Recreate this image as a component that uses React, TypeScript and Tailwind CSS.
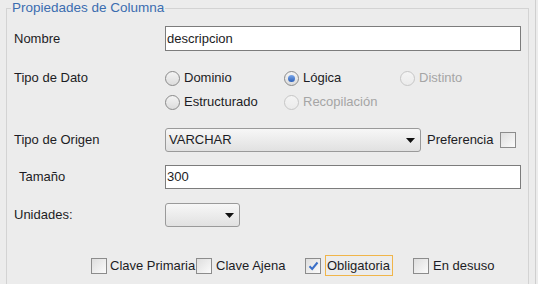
import React from "react";

function Radio({ label, checked = false, disabled = false }: { label: string; checked?: boolean; disabled?: boolean }) {
  return (
    <div className="flex h-[24px] items-center">
      <span
        className={`flex h-[15px] w-[15px] items-center justify-center rounded-full border bg-gradient-to-b from-[#f4f4f4] to-[#dcdcdc] ${
          disabled ? "border-[#c6c6c6] from-[#f4f4f4] to-[#ebebeb]" : "border-[#8a8a8a]"
        }`}
      >
        {checked && <span className="h-[7px] w-[7px] rounded-full bg-gradient-to-b from-[#7aa7ea] to-[#2c5fb8]" />}
      </span>
      <span className={`ml-[4px] ${disabled ? "text-[#a5a5a5]" : ""}`}>{label}</span>
    </div>
  );
}

function Check({ checked = false }: { checked?: boolean }) {
  return (
    <span className="flex h-[16px] w-[16px] shrink-0 items-center justify-center border border-[#8c8c8c] bg-gradient-to-br from-[#dedede] to-[#fbfbfb]">
      {checked && (
        <svg width="11" height="10" viewBox="0 0 11 10">
          <path d="M1.5 5.2 L4.2 8 L9.5 1.5" fill="none" stroke="#3a6fc8" strokeWidth="2" />
        </svg>
      )}
    </span>
  );
}

function Combo({ value, width }: { value?: string; width: string }) {
  return (
    <div
      className={`flex h-[24px] ${width} items-center justify-between rounded-[3px] border border-[#9a9a9a] bg-gradient-to-b from-[#f7f7f7] to-[#e1e1e1] pl-[3px] pr-[5px]`}
    >
      <span>{value}</span>
      <svg width="9" height="5" viewBox="0 0 9 5">
        <path d="M0 0 H9 L4.5 5 Z" fill="#111" />
      </svg>
    </div>
  );
}

export default function App() {
  return (
    <div className="flex h-[284px] w-[538px] overflow-hidden bg-[#ececec] font-['Liberation_Sans',Arial,sans-serif] text-[13px] leading-[16px] text-[#1c1c24]">
      <fieldset className="ml-[6px] h-[300px] w-[523px] border border-[#d3d3d3]">
        <legend className="ml-[4px] px-[1px] text-[13.5px] text-[#3b6db0]">Propiedades de Columna</legend>

        <div className="mt-[10px] flex items-center pl-[7px]">
          <span className="w-[151px]">Nombre</span>
          <div className="flex h-[25px] w-[356px] items-center border border-[#7c7c7c] bg-white pl-[1px]">descripcion</div>
        </div>

        <div className="mt-[15px] flex pl-[7px]">
          <span className="w-[151px] leading-[24px]">Tipo de Dato</span>
          <div className="grid grid-cols-[119px_116px_auto]">
            <Radio label="Dominio" />
            <Radio label="Lógica" checked />
            <Radio label="Distinto" disabled />
            <Radio label="Estructurado" />
            <Radio label="Recopilación" disabled />
          </div>
        </div>

        <div className="mt-[14px] flex items-center pl-[7px]">
          <span className="w-[151px]">Tipo de Origen</span>
          <Combo value="VARCHAR" width="w-[256px]" />
          <span className="ml-[6px]">Preferencia</span>
          <span className="ml-[7px] h-[16px] w-[16px] border border-[#8c8c8c] bg-gradient-to-br from-[#dedede] to-[#fbfbfb]" />
        </div>

        <div className="mt-[13px] flex items-center pl-[7px]">
          <span className="w-[151px] pl-[5px]">Tamaño</span>
          <div className="flex h-[24px] w-[356px] items-center border border-[#7c7c7c] bg-white pl-[1px]">300</div>
        </div>

        <div className="mt-[14px] flex items-center pl-[7px]">
          <span className="w-[151px]">Unidades:</span>
          <Combo width="w-[75px]" />
        </div>

        <div className="mt-[28px] flex items-center pl-[84px]">
          <Check />
          <span className="ml-[3px] w-[86px]">Clave Primaria</span>
          <Check />
          <span className="ml-[4px] w-[89px]">Clave Ajena</span>
          <Check checked />
          <span className="ml-[4px] flex h-[21px] w-[68px] items-center border border-[#f0b54a] pl-[1px]">Obligatoria</span>
          <span className="ml-[20px]">
            <Check />
          </span>
          <span className="ml-[4px]">En desuso</span>
        </div>
      </fieldset>
      <div className="ml-[6px] h-full w-[1px] bg-[#cfcfcf]" />
    </div>
  );
}
